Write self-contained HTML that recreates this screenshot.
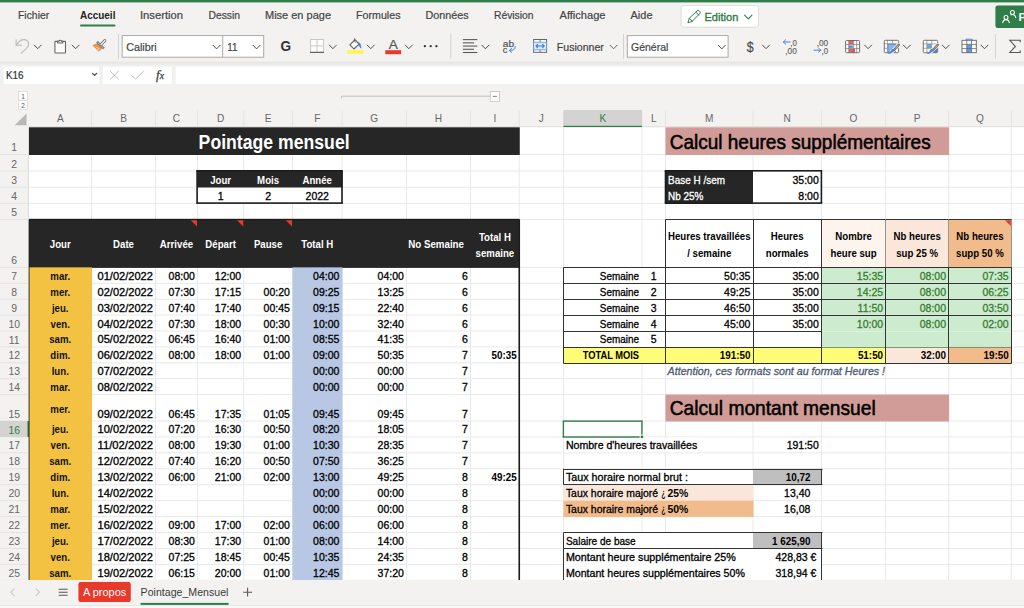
<!DOCTYPE html>
<html lang="fr"><head><meta charset="utf-8"><title>Pointage mensuel</title>
<style>
html,body{margin:0;padding:0}
body{width:1024px;height:608px;overflow:hidden;background:#f3f2f1;font-family:"Liberation Sans",sans-serif;position:relative}
.abs{position:absolute}
.tab{position:absolute;top:9px;font-size:10.5px;color:#444;line-height:13px;white-space:nowrap}
.tb{position:absolute;white-space:nowrap}

</style></head><body>
<svg width="1024" height="608" viewBox="0 0 1024 608" style="position:absolute;left:0;top:0;font-family:'Liberation Sans',sans-serif"><g><rect x="29" y="126.40" width="995" height="0.9" fill="#d9d8d7"/><rect x="28.2" y="127.30" width="0.9" height="452.70" fill="#d9d8d7"/><rect x="91.00" y="111.00" width="1" height="16.30" fill="#e4e3e2"/><rect x="155.00" y="111.00" width="1" height="16.30" fill="#e4e3e2"/><rect x="197.00" y="111.00" width="1" height="16.30" fill="#e4e3e2"/><rect x="243.25" y="111.00" width="1" height="16.30" fill="#e4e3e2"/><rect x="292.00" y="111.00" width="1" height="16.30" fill="#e4e3e2"/><rect x="341.50" y="111.00" width="1" height="16.30" fill="#e4e3e2"/><rect x="406.00" y="111.00" width="1" height="16.30" fill="#e4e3e2"/><rect x="470.00" y="111.00" width="1" height="16.30" fill="#e4e3e2"/><rect x="518.75" y="111.00" width="1" height="16.30" fill="#e4e3e2"/><rect x="563.00" y="111.00" width="1" height="16.30" fill="#e4e3e2"/><rect x="641.50" y="111.00" width="1" height="16.30" fill="#e4e3e2"/><rect x="665.00" y="111.00" width="1" height="16.30" fill="#e4e3e2"/><rect x="752.50" y="111.00" width="1" height="16.30" fill="#e4e3e2"/><rect x="820.90" y="111.00" width="1" height="16.30" fill="#e4e3e2"/><rect x="885.20" y="111.00" width="1" height="16.30" fill="#e4e3e2"/><rect x="948.10" y="111.00" width="1" height="16.30" fill="#e4e3e2"/><rect x="1010.80" y="111.00" width="1" height="16.30" fill="#e4e3e2"/><rect x="563.50" y="110.00" width="78.50" height="17.30" fill="#d4d3d1"/><rect x="563.50" y="125.80" width="78.50" height="1.5" fill="#2f7d4a"/><text x="60.25" y="121.50" text-anchor="middle" style="font-size:10.1px;fill:#666666">A</text><text x="123.50" y="121.50" text-anchor="middle" style="font-size:10.1px;fill:#666666">B</text><text x="176.50" y="121.50" text-anchor="middle" style="font-size:10.1px;fill:#666666">C</text><text x="220.62" y="121.50" text-anchor="middle" style="font-size:10.1px;fill:#666666">D</text><text x="268.12" y="121.50" text-anchor="middle" style="font-size:10.1px;fill:#666666">E</text><text x="317.25" y="121.50" text-anchor="middle" style="font-size:10.1px;fill:#666666">F</text><text x="374.25" y="121.50" text-anchor="middle" style="font-size:10.1px;fill:#666666">G</text><text x="438.50" y="121.50" text-anchor="middle" style="font-size:10.1px;fill:#666666">H</text><text x="494.88" y="121.50" text-anchor="middle" style="font-size:10.1px;fill:#666666">I</text><text x="541.38" y="121.50" text-anchor="middle" style="font-size:10.1px;fill:#666666">J</text><text x="602.75" y="121.50" text-anchor="middle" style="font-size:10.1px;fill:#2f7d4a">K</text><text x="653.75" y="121.50" text-anchor="middle" style="font-size:10.1px;fill:#666666">L</text><text x="709.25" y="121.50" text-anchor="middle" style="font-size:10.1px;fill:#666666">M</text><text x="787.20" y="121.50" text-anchor="middle" style="font-size:10.1px;fill:#666666">N</text><text x="853.55" y="121.50" text-anchor="middle" style="font-size:10.1px;fill:#666666">O</text><text x="917.15" y="121.50" text-anchor="middle" style="font-size:10.1px;fill:#666666">P</text><text x="979.95" y="121.50" text-anchor="middle" style="font-size:10.1px;fill:#666666">Q</text><rect x="0" y="154.00" width="29" height="1" fill="#e4e3e2"/><rect x="0" y="170.50" width="29" height="1" fill="#e4e3e2"/><rect x="0" y="186.70" width="29" height="1" fill="#e4e3e2"/><rect x="0" y="202.90" width="29" height="1" fill="#e4e3e2"/><rect x="0" y="219.00" width="29" height="1" fill="#e4e3e2"/><rect x="0" y="266.90" width="29" height="1" fill="#e4e3e2"/><rect x="0" y="282.80" width="29" height="1" fill="#e4e3e2"/><rect x="0" y="298.70" width="29" height="1" fill="#e4e3e2"/><rect x="0" y="314.60" width="29" height="1" fill="#e4e3e2"/><rect x="0" y="330.50" width="29" height="1" fill="#e4e3e2"/><rect x="0" y="346.40" width="29" height="1" fill="#e4e3e2"/><rect x="0" y="362.30" width="29" height="1" fill="#e4e3e2"/><rect x="0" y="378.20" width="29" height="1" fill="#e4e3e2"/><rect x="0" y="394.10" width="29" height="1" fill="#e4e3e2"/><rect x="0" y="420.50" width="29" height="1" fill="#e4e3e2"/><rect x="0" y="436.43" width="29" height="1" fill="#e4e3e2"/><rect x="0" y="452.36" width="29" height="1" fill="#e4e3e2"/><rect x="0" y="468.29" width="29" height="1" fill="#e4e3e2"/><rect x="0" y="484.22" width="29" height="1" fill="#e4e3e2"/><rect x="0" y="500.15" width="29" height="1" fill="#e4e3e2"/><rect x="0" y="516.08" width="29" height="1" fill="#e4e3e2"/><rect x="0" y="532.01" width="29" height="1" fill="#e4e3e2"/><rect x="0" y="547.94" width="29" height="1" fill="#e4e3e2"/><rect x="0" y="563.87" width="29" height="1" fill="#e4e3e2"/><rect x="0" y="579.80" width="29" height="1" fill="#e4e3e2"/><rect x="0" y="421.00" width="29" height="15.93" fill="#d4d3d1"/><rect x="27.5" y="421.00" width="1.5" height="15.93" fill="#2f7d4a"/><text x="14.20" y="151.10" text-anchor="middle" style="font-size:10.4px;fill:#666666">1</text><text x="14.20" y="167.60" text-anchor="middle" style="font-size:10.4px;fill:#666666">2</text><text x="14.20" y="183.80" text-anchor="middle" style="font-size:10.4px;fill:#666666">3</text><text x="14.20" y="200.00" text-anchor="middle" style="font-size:10.4px;fill:#666666">4</text><text x="14.20" y="216.10" text-anchor="middle" style="font-size:10.4px;fill:#666666">5</text><text x="14.20" y="264.00" text-anchor="middle" style="font-size:10.4px;fill:#666666">6</text><text x="14.20" y="279.90" text-anchor="middle" style="font-size:10.4px;fill:#666666">7</text><text x="14.20" y="295.80" text-anchor="middle" style="font-size:10.4px;fill:#666666">8</text><text x="14.20" y="311.70" text-anchor="middle" style="font-size:10.4px;fill:#666666">9</text><text x="14.20" y="327.60" text-anchor="middle" style="font-size:10.4px;fill:#666666">10</text><text x="14.20" y="343.50" text-anchor="middle" style="font-size:10.4px;fill:#666666">11</text><text x="14.20" y="359.40" text-anchor="middle" style="font-size:10.4px;fill:#666666">12</text><text x="14.20" y="375.30" text-anchor="middle" style="font-size:10.4px;fill:#666666">13</text><text x="14.20" y="391.20" text-anchor="middle" style="font-size:10.4px;fill:#666666">14</text><text x="14.20" y="417.60" text-anchor="middle" style="font-size:10.4px;fill:#666666">15</text><text x="14.20" y="433.53" text-anchor="middle" style="font-size:10.4px;fill:#2f7d4a">16</text><text x="14.20" y="449.46" text-anchor="middle" style="font-size:10.4px;fill:#666666">17</text><text x="14.20" y="465.39" text-anchor="middle" style="font-size:10.4px;fill:#666666">18</text><text x="14.20" y="481.32" text-anchor="middle" style="font-size:10.4px;fill:#666666">19</text><text x="14.20" y="497.25" text-anchor="middle" style="font-size:10.4px;fill:#666666">20</text><text x="14.20" y="513.18" text-anchor="middle" style="font-size:10.4px;fill:#666666">21</text><text x="14.20" y="529.11" text-anchor="middle" style="font-size:10.4px;fill:#666666">22</text><text x="14.20" y="545.04" text-anchor="middle" style="font-size:10.4px;fill:#666666">23</text><text x="14.20" y="560.97" text-anchor="middle" style="font-size:10.4px;fill:#666666">24</text><text x="14.20" y="576.90" text-anchor="middle" style="font-size:10.4px;fill:#666666">25</text><path d="M26.5 113.5V125.3H14.7Z" fill="#b9b8b7"/><rect x="18.6" y="91.60" width="9" height="8.8" fill="#fff" stroke="#d0cfce" stroke-width="0.6"/><text x="23.1" y="98.50" text-anchor="middle" style="font-size:6.5px;fill:#555">1</text><rect x="18.6" y="100.70" width="9" height="8.8" fill="#fff" stroke="#d0cfce" stroke-width="0.6"/><text x="23.1" y="107.60" text-anchor="middle" style="font-size:6.5px;fill:#555">2</text><path d="M341.5 98.5V96.2H490" fill="none" stroke="#c2c1c0" stroke-width="1"/><rect x="490.2" y="91.5" width="9.4" height="9.8" fill="#fff" stroke="#c2c1c0" stroke-width="0.8"/><rect x="492.9" y="95.9" width="4" height="0.9" fill="#777"/></g><g><rect x="29.00" y="127.30" width="995.00" height="452.70" fill="#fff" /><rect x="91.00" y="127.30" width="1.00" height="452.70" fill="#e9e9e9"/><rect x="155.00" y="127.30" width="1.00" height="452.70" fill="#e9e9e9"/><rect x="197.00" y="127.30" width="1.00" height="452.70" fill="#e9e9e9"/><rect x="243.25" y="127.30" width="1.00" height="452.70" fill="#e9e9e9"/><rect x="292.00" y="127.30" width="1.00" height="452.70" fill="#e9e9e9"/><rect x="341.50" y="127.30" width="1.00" height="452.70" fill="#e9e9e9"/><rect x="406.00" y="127.30" width="1.00" height="452.70" fill="#e9e9e9"/><rect x="470.00" y="127.30" width="1.00" height="452.70" fill="#e9e9e9"/><rect x="518.75" y="127.30" width="1.00" height="452.70" fill="#e9e9e9"/><rect x="563.00" y="127.30" width="1.00" height="452.70" fill="#e9e9e9"/><rect x="641.50" y="127.30" width="1.00" height="452.70" fill="#e9e9e9"/><rect x="665.00" y="127.30" width="1.00" height="452.70" fill="#e9e9e9"/><rect x="752.50" y="127.30" width="1.00" height="452.70" fill="#e9e9e9"/><rect x="820.90" y="127.30" width="1.00" height="452.70" fill="#e9e9e9"/><rect x="885.20" y="127.30" width="1.00" height="452.70" fill="#e9e9e9"/><rect x="948.10" y="127.30" width="1.00" height="452.70" fill="#e9e9e9"/><rect x="1010.80" y="127.30" width="1.00" height="452.70" fill="#e9e9e9"/><rect x="29.00" y="154.00" width="995.00" height="1.00" fill="#e9e9e9"/><rect x="29.00" y="170.50" width="995.00" height="1.00" fill="#e9e9e9"/><rect x="29.00" y="186.70" width="995.00" height="1.00" fill="#e9e9e9"/><rect x="29.00" y="202.90" width="995.00" height="1.00" fill="#e9e9e9"/><rect x="29.00" y="219.00" width="995.00" height="1.00" fill="#e9e9e9"/><rect x="29.00" y="266.90" width="995.00" height="1.00" fill="#e9e9e9"/><rect x="29.00" y="282.80" width="995.00" height="1.00" fill="#e9e9e9"/><rect x="29.00" y="298.70" width="995.00" height="1.00" fill="#e9e9e9"/><rect x="29.00" y="314.60" width="995.00" height="1.00" fill="#e9e9e9"/><rect x="29.00" y="330.50" width="995.00" height="1.00" fill="#e9e9e9"/><rect x="29.00" y="346.40" width="995.00" height="1.00" fill="#e9e9e9"/><rect x="29.00" y="362.30" width="995.00" height="1.00" fill="#e9e9e9"/><rect x="29.00" y="378.20" width="995.00" height="1.00" fill="#e9e9e9"/><rect x="29.00" y="394.10" width="995.00" height="1.00" fill="#e9e9e9"/><rect x="29.00" y="420.50" width="995.00" height="1.00" fill="#e9e9e9"/><rect x="29.00" y="436.43" width="995.00" height="1.00" fill="#e9e9e9"/><rect x="29.00" y="452.36" width="995.00" height="1.00" fill="#e9e9e9"/><rect x="29.00" y="468.29" width="995.00" height="1.00" fill="#e9e9e9"/><rect x="29.00" y="484.22" width="995.00" height="1.00" fill="#e9e9e9"/><rect x="29.00" y="500.15" width="995.00" height="1.00" fill="#e9e9e9"/><rect x="29.00" y="516.08" width="995.00" height="1.00" fill="#e9e9e9"/><rect x="29.00" y="532.01" width="995.00" height="1.00" fill="#e9e9e9"/><rect x="29.00" y="547.94" width="995.00" height="1.00" fill="#e9e9e9"/><rect x="29.00" y="563.87" width="995.00" height="1.00" fill="#e9e9e9"/><rect x="29.00" y="579.80" width="995.00" height="1.00" fill="#e9e9e9"/><rect x="29.00" y="127.30" width="490.75" height="27.70" fill="#262626" /><rect x="197.50" y="171.00" width="145.00" height="16.70" fill="#262626" /><rect x="197.50" y="187.70" width="145.00" height="16.20" fill="#fff" /><rect x="29.00" y="219.50" width="490.75" height="48.40" fill="#262626" /><rect x="29.00" y="267.40" width="63.00" height="313.10" fill="#f4c242" /><rect x="292.50" y="267.40" width="50.00" height="313.10" fill="#b7c7e4" /><rect x="665.50" y="127.30" width="283.60" height="27.70" fill="#d19b97" /><rect x="665.50" y="171.00" width="88.00" height="32.90" fill="#262626" /><rect x="753.00" y="171.00" width="68.90" height="32.90" fill="#fff" /><rect x="665.50" y="219.50" width="156.40" height="48.40" fill="#fff" /><rect x="821.40" y="219.50" width="64.80" height="48.40" fill="#fdf4ee" /><rect x="885.70" y="219.50" width="63.40" height="48.40" fill="#fbe7da" /><rect x="948.60" y="219.50" width="63.20" height="48.40" fill="#f1bb8c" /><rect x="563.50" y="267.40" width="258.40" height="80.00" fill="#fff" /><rect x="821.40" y="267.40" width="190.40" height="80.00" fill="#cdebcf" /><rect x="563.50" y="346.90" width="322.70" height="16.40" fill="#fffd78" /><rect x="885.70" y="346.90" width="63.40" height="16.40" fill="#fbe7da" /><rect x="948.60" y="346.90" width="63.20" height="16.40" fill="#f1bb8c" /><rect x="665.50" y="394.60" width="283.60" height="26.90" fill="#d19b97" /><rect x="563.50" y="468.79" width="190.00" height="16.43" fill="#fff" /><rect x="753.00" y="468.79" width="68.90" height="16.43" fill="#bfbfbf" /><rect x="563.50" y="484.72" width="190.00" height="16.43" fill="#fbe7da" /><rect x="563.50" y="500.65" width="190.00" height="16.43" fill="#f1bb8c" /><rect x="563.50" y="532.51" width="190.00" height="48.29" fill="#fff" /><rect x="753.00" y="532.51" width="68.90" height="16.43" fill="#bfbfbf" /><rect x="753.00" y="548.44" width="68.90" height="32.36" fill="#fff" /><rect x="564.10" y="437.53" width="135.90" height="14.73" fill="#fff" /><rect x="666.10" y="363.40" width="218.90" height="14.70" fill="#fff" /><rect x="28.70" y="219.50" width="0.80" height="360.50" fill="#1c1c1c"/><rect x="518.45" y="219.50" width="1.60" height="360.50" fill="#1c1c1c"/><rect x="29.00" y="218.80" width="490.25" height="1.40" fill="#1c1c1c"/><rect x="196.30" y="170.00" width="146.50" height="1.60" fill="#1c1c1c"/><rect x="196.30" y="202.30" width="146.50" height="1.60" fill="#1c1c1c"/><rect x="196.30" y="170.80" width="1.60" height="32.30" fill="#1c1c1c"/><rect x="341.20" y="170.80" width="1.60" height="32.30" fill="#1c1c1c"/><rect x="664.70" y="170.00" width="157.50" height="1.60" fill="#1c1c1c"/><rect x="664.70" y="202.30" width="157.50" height="1.60" fill="#1c1c1c"/><rect x="664.70" y="170.80" width="1.60" height="32.30" fill="#1c1c1c"/><rect x="820.60" y="170.80" width="1.60" height="32.30" fill="#1c1c1c"/><rect x="665.50" y="219.00" width="346.30" height="1.00" fill="#333333"/><rect x="753.00" y="219.50" width="1.00" height="47.90" fill="#333333"/><rect x="821.00" y="219.50" width="1.00" height="47.90" fill="#333333"/><rect x="665.00" y="219.50" width="1.00" height="47.90" fill="#333333"/><rect x="885.00" y="219.50" width="1.00" height="47.90" fill="#9a948e"/><rect x="948.00" y="219.50" width="1.00" height="47.90" fill="#9a948e"/><rect x="1011.00" y="219.50" width="1.00" height="47.90" fill="#9a948e"/><rect x="665.50" y="267.00" width="346.30" height="1.00" fill="#333333"/><rect x="563.50" y="283.00" width="448.30" height="1.00" fill="#333333"/><rect x="563.50" y="299.00" width="448.30" height="1.00" fill="#333333"/><rect x="563.50" y="315.00" width="448.30" height="1.00" fill="#333333"/><rect x="563.50" y="331.00" width="448.30" height="1.00" fill="#333333"/><rect x="563.50" y="347.00" width="448.30" height="1.00" fill="#333333"/><rect x="563.50" y="363.00" width="448.30" height="1.00" fill="#333333"/><rect x="563.50" y="267.00" width="189.50" height="1.00" fill="#333333"/><rect x="822.00" y="331.00" width="189.00" height="1.00" fill="#dcf1dc"/><rect x="822.00" y="347.00" width="189.00" height="1.00" fill="#7d956c"/><rect x="665.00" y="267.40" width="1.00" height="95.90" fill="#333333"/><rect x="753.00" y="267.40" width="1.00" height="95.90" fill="#333333"/><rect x="821.00" y="267.40" width="1.00" height="95.90" fill="#333333"/><rect x="885.00" y="267.40" width="1.00" height="95.90" fill="#333333"/><rect x="948.00" y="267.40" width="1.00" height="95.90" fill="#333333"/><rect x="1011.00" y="267.40" width="1.00" height="95.90" fill="#333333"/><rect x="563.00" y="267.40" width="1.00" height="95.90" fill="#333333"/><rect x="563.50" y="469.00" width="258.90" height="1.00" fill="#333333"/><rect x="563.50" y="484.00" width="258.90" height="1.00" fill="#333333"/><rect x="563.00" y="468.79" width="1.00" height="15.93" fill="#333333"/><rect x="821.00" y="468.79" width="1.00" height="15.93" fill="#333333"/><rect x="563.50" y="532.00" width="258.90" height="1.00" fill="#333333"/><rect x="563.50" y="548.00" width="258.90" height="1.00" fill="#333333"/><rect x="563.00" y="532.51" width="1.00" height="15.93" fill="#333333"/><rect x="821.00" y="532.51" width="1.00" height="15.93" fill="#333333"/><rect x="563.00" y="548.44" width="1.00" height="31.56" fill="#333333"/><rect x="821.00" y="548.44" width="1.00" height="31.56" fill="#333333"/><path d="M190.80 220.30H197.00V226.50Z" fill="#e8392b"/><path d="M237.05 220.30H243.25V226.50Z" fill="#e8392b"/><path d="M285.80 220.30H292.00V226.50Z" fill="#e8392b"/><path d="M1005.00 220.30H1010.80V226.10Z" fill="#e8392b"/><rect x="562.70" y="420.40" width="79.90" height="1.40" fill="#2f7d4a"/><rect x="562.70" y="436.33" width="79.90" height="1.40" fill="#2f7d4a"/><rect x="562.70" y="421.10" width="1.40" height="15.93" fill="#2f7d4a"/><rect x="641.20" y="421.10" width="1.40" height="15.93" fill="#2f7d4a"/><rect x="639.70" y="434.63" width="3.80" height="3.80" fill="#fff" /><rect x="640.70" y="435.63" width="2.50" height="2.50" fill="#2f7d4a" /><text x="274.12" y="148.80" text-anchor="middle" style="font-size:20.4px;fill:#fff;stroke:#fff;stroke-width:0.00px;font-weight:bold;" textLength="151" lengthAdjust="spacingAndGlyphs" >Pointage mensuel</text><text transform="translate(220.62,183.70) scale(0.92,1)" text-anchor="middle" style="font-size:10.5px;fill:#fff;stroke:#fff;stroke-width:0.00px;font-weight:bold;" >Jour</text><text transform="translate(268.12,183.70) scale(0.92,1)" text-anchor="middle" style="font-size:10.5px;fill:#fff;stroke:#fff;stroke-width:0.00px;font-weight:bold;" >Mois</text><text transform="translate(317.25,183.70) scale(0.92,1)" text-anchor="middle" style="font-size:10.5px;fill:#fff;stroke:#fff;stroke-width:0.00px;font-weight:bold;" >Année</text><text x="220.62" y="199.90" text-anchor="middle" style="font-size:10.5px;fill:#000;stroke:#000;stroke-width:0.30px;" >1</text><text x="268.12" y="199.90" text-anchor="middle" style="font-size:10.5px;fill:#000;stroke:#000;stroke-width:0.30px;" >2</text><text x="317.25" y="199.90" text-anchor="middle" style="font-size:10.5px;fill:#000;stroke:#000;stroke-width:0.30px;" >2022</text><text transform="translate(60.25,248.40) scale(0.92,1)" text-anchor="middle" style="font-size:10.5px;fill:#fff;stroke:#fff;stroke-width:0.00px;font-weight:bold;" >Jour</text><text transform="translate(123.50,248.40) scale(0.92,1)" text-anchor="middle" style="font-size:10.5px;fill:#fff;stroke:#fff;stroke-width:0.00px;font-weight:bold;" >Date</text><text transform="translate(176.50,248.40) scale(0.92,1)" text-anchor="middle" style="font-size:10.5px;fill:#fff;stroke:#fff;stroke-width:0.00px;font-weight:bold;" >Arrivée</text><text transform="translate(220.62,248.40) scale(0.92,1)" text-anchor="middle" style="font-size:10.5px;fill:#fff;stroke:#fff;stroke-width:0.00px;font-weight:bold;" >Départ</text><text transform="translate(268.12,248.40) scale(0.92,1)" text-anchor="middle" style="font-size:10.5px;fill:#fff;stroke:#fff;stroke-width:0.00px;font-weight:bold;" >Pause</text><text transform="translate(317.25,248.40) scale(0.92,1)" text-anchor="middle" style="font-size:10.5px;fill:#fff;stroke:#fff;stroke-width:0.00px;font-weight:bold;" >Total H</text><text x="436.10" y="248.40" text-anchor="middle" style="font-size:10.5px;fill:#fff;stroke:#fff;stroke-width:0.00px;font-weight:bold;" textLength="55.8" lengthAdjust="spacingAndGlyphs" >No Semaine</text><text transform="translate(494.88,240.70) scale(0.92,1)" text-anchor="middle" style="font-size:10.5px;fill:#fff;stroke:#fff;stroke-width:0.00px;font-weight:bold;" >Total H</text><text transform="translate(494.88,256.70) scale(0.92,1)" text-anchor="middle" style="font-size:10.5px;fill:#fff;stroke:#fff;stroke-width:0.00px;font-weight:bold;" >semaine</text><text transform="translate(60.25,279.80) scale(0.92,1)" text-anchor="middle" style="font-size:10.5px;fill:#111;stroke:#111;stroke-width:0.00px;font-weight:bold;" >mar.</text><text x="152.90" y="279.80" text-anchor="end" style="font-size:10.5px;fill:#000;stroke:#000;stroke-width:0.30px;" textLength="55.4" lengthAdjust="spacingAndGlyphs" >01/02/2022</text><text x="194.90" y="279.80" text-anchor="end" style="font-size:10.5px;fill:#000;stroke:#000;stroke-width:0.30px;" >08:00</text><text x="241.15" y="279.80" text-anchor="end" style="font-size:10.5px;fill:#000;stroke:#000;stroke-width:0.30px;" >12:00</text><text x="339.40" y="279.80" text-anchor="end" style="font-size:10.5px;fill:#000;stroke:#000;stroke-width:0.30px;" >04:00</text><text x="403.90" y="279.80" text-anchor="end" style="font-size:10.5px;fill:#000;stroke:#000;stroke-width:0.30px;" >04:00</text><text x="467.90" y="279.80" text-anchor="end" style="font-size:10.5px;fill:#000;stroke:#000;stroke-width:0.30px;" >6</text><text transform="translate(60.25,295.70) scale(0.92,1)" text-anchor="middle" style="font-size:10.5px;fill:#111;stroke:#111;stroke-width:0.00px;font-weight:bold;" >mer.</text><text x="152.90" y="295.70" text-anchor="end" style="font-size:10.5px;fill:#000;stroke:#000;stroke-width:0.30px;" textLength="55.4" lengthAdjust="spacingAndGlyphs" >02/02/2022</text><text x="194.90" y="295.70" text-anchor="end" style="font-size:10.5px;fill:#000;stroke:#000;stroke-width:0.30px;" >07:30</text><text x="241.15" y="295.70" text-anchor="end" style="font-size:10.5px;fill:#000;stroke:#000;stroke-width:0.30px;" >17:15</text><text x="289.90" y="295.70" text-anchor="end" style="font-size:10.5px;fill:#000;stroke:#000;stroke-width:0.30px;" >00:20</text><text x="339.40" y="295.70" text-anchor="end" style="font-size:10.5px;fill:#000;stroke:#000;stroke-width:0.30px;" >09:25</text><text x="403.90" y="295.70" text-anchor="end" style="font-size:10.5px;fill:#000;stroke:#000;stroke-width:0.30px;" >13:25</text><text x="467.90" y="295.70" text-anchor="end" style="font-size:10.5px;fill:#000;stroke:#000;stroke-width:0.30px;" >6</text><text transform="translate(60.25,311.60) scale(0.92,1)" text-anchor="middle" style="font-size:10.5px;fill:#111;stroke:#111;stroke-width:0.00px;font-weight:bold;" >jeu.</text><text x="152.90" y="311.60" text-anchor="end" style="font-size:10.5px;fill:#000;stroke:#000;stroke-width:0.30px;" textLength="55.4" lengthAdjust="spacingAndGlyphs" >03/02/2022</text><text x="194.90" y="311.60" text-anchor="end" style="font-size:10.5px;fill:#000;stroke:#000;stroke-width:0.30px;" >07:40</text><text x="241.15" y="311.60" text-anchor="end" style="font-size:10.5px;fill:#000;stroke:#000;stroke-width:0.30px;" >17:40</text><text x="289.90" y="311.60" text-anchor="end" style="font-size:10.5px;fill:#000;stroke:#000;stroke-width:0.30px;" >00:45</text><text x="339.40" y="311.60" text-anchor="end" style="font-size:10.5px;fill:#000;stroke:#000;stroke-width:0.30px;" >09:15</text><text x="403.90" y="311.60" text-anchor="end" style="font-size:10.5px;fill:#000;stroke:#000;stroke-width:0.30px;" >22:40</text><text x="467.90" y="311.60" text-anchor="end" style="font-size:10.5px;fill:#000;stroke:#000;stroke-width:0.30px;" >6</text><text transform="translate(60.25,327.50) scale(0.92,1)" text-anchor="middle" style="font-size:10.5px;fill:#111;stroke:#111;stroke-width:0.00px;font-weight:bold;" >ven.</text><text x="152.90" y="327.50" text-anchor="end" style="font-size:10.5px;fill:#000;stroke:#000;stroke-width:0.30px;" textLength="55.4" lengthAdjust="spacingAndGlyphs" >04/02/2022</text><text x="194.90" y="327.50" text-anchor="end" style="font-size:10.5px;fill:#000;stroke:#000;stroke-width:0.30px;" >07:30</text><text x="241.15" y="327.50" text-anchor="end" style="font-size:10.5px;fill:#000;stroke:#000;stroke-width:0.30px;" >18:00</text><text x="289.90" y="327.50" text-anchor="end" style="font-size:10.5px;fill:#000;stroke:#000;stroke-width:0.30px;" >00:30</text><text x="339.40" y="327.50" text-anchor="end" style="font-size:10.5px;fill:#000;stroke:#000;stroke-width:0.30px;" >10:00</text><text x="403.90" y="327.50" text-anchor="end" style="font-size:10.5px;fill:#000;stroke:#000;stroke-width:0.30px;" >32:40</text><text x="467.90" y="327.50" text-anchor="end" style="font-size:10.5px;fill:#000;stroke:#000;stroke-width:0.30px;" >6</text><text transform="translate(60.25,343.40) scale(0.92,1)" text-anchor="middle" style="font-size:10.5px;fill:#111;stroke:#111;stroke-width:0.00px;font-weight:bold;" >sam.</text><text x="152.90" y="343.40" text-anchor="end" style="font-size:10.5px;fill:#000;stroke:#000;stroke-width:0.30px;" textLength="55.4" lengthAdjust="spacingAndGlyphs" >05/02/2022</text><text x="194.90" y="343.40" text-anchor="end" style="font-size:10.5px;fill:#000;stroke:#000;stroke-width:0.30px;" >06:45</text><text x="241.15" y="343.40" text-anchor="end" style="font-size:10.5px;fill:#000;stroke:#000;stroke-width:0.30px;" >16:40</text><text x="289.90" y="343.40" text-anchor="end" style="font-size:10.5px;fill:#000;stroke:#000;stroke-width:0.30px;" >01:00</text><text x="339.40" y="343.40" text-anchor="end" style="font-size:10.5px;fill:#000;stroke:#000;stroke-width:0.30px;" >08:55</text><text x="403.90" y="343.40" text-anchor="end" style="font-size:10.5px;fill:#000;stroke:#000;stroke-width:0.30px;" >41:35</text><text x="467.90" y="343.40" text-anchor="end" style="font-size:10.5px;fill:#000;stroke:#000;stroke-width:0.30px;" >6</text><text transform="translate(60.25,359.30) scale(0.92,1)" text-anchor="middle" style="font-size:10.5px;fill:#111;stroke:#111;stroke-width:0.00px;font-weight:bold;" >dim.</text><text x="152.90" y="359.30" text-anchor="end" style="font-size:10.5px;fill:#000;stroke:#000;stroke-width:0.30px;" textLength="55.4" lengthAdjust="spacingAndGlyphs" >06/02/2022</text><text x="194.90" y="359.30" text-anchor="end" style="font-size:10.5px;fill:#000;stroke:#000;stroke-width:0.30px;" >08:00</text><text x="241.15" y="359.30" text-anchor="end" style="font-size:10.5px;fill:#000;stroke:#000;stroke-width:0.30px;" >18:00</text><text x="289.90" y="359.30" text-anchor="end" style="font-size:10.5px;fill:#000;stroke:#000;stroke-width:0.30px;" >01:00</text><text x="339.40" y="359.30" text-anchor="end" style="font-size:10.5px;fill:#000;stroke:#000;stroke-width:0.30px;" >09:00</text><text x="403.90" y="359.30" text-anchor="end" style="font-size:10.5px;fill:#000;stroke:#000;stroke-width:0.30px;" >50:35</text><text x="467.90" y="359.30" text-anchor="end" style="font-size:10.5px;fill:#000;stroke:#000;stroke-width:0.30px;" >7</text><text transform="translate(516.65,359.30) scale(0.94,1)" text-anchor="end" style="font-size:10.5px;fill:#000;stroke:#000;stroke-width:0.00px;font-weight:bold;" >50:35</text><text transform="translate(60.25,375.20) scale(0.92,1)" text-anchor="middle" style="font-size:10.5px;fill:#111;stroke:#111;stroke-width:0.00px;font-weight:bold;" >lun.</text><text x="152.90" y="375.20" text-anchor="end" style="font-size:10.5px;fill:#000;stroke:#000;stroke-width:0.30px;" textLength="55.4" lengthAdjust="spacingAndGlyphs" >07/02/2022</text><text x="339.40" y="375.20" text-anchor="end" style="font-size:10.5px;fill:#000;stroke:#000;stroke-width:0.30px;" >00:00</text><text x="403.90" y="375.20" text-anchor="end" style="font-size:10.5px;fill:#000;stroke:#000;stroke-width:0.30px;" >00:00</text><text x="467.90" y="375.20" text-anchor="end" style="font-size:10.5px;fill:#000;stroke:#000;stroke-width:0.30px;" >7</text><text transform="translate(60.25,391.10) scale(0.92,1)" text-anchor="middle" style="font-size:10.5px;fill:#111;stroke:#111;stroke-width:0.00px;font-weight:bold;" >mar.</text><text x="152.90" y="391.10" text-anchor="end" style="font-size:10.5px;fill:#000;stroke:#000;stroke-width:0.30px;" textLength="55.4" lengthAdjust="spacingAndGlyphs" >08/02/2022</text><text x="339.40" y="391.10" text-anchor="end" style="font-size:10.5px;fill:#000;stroke:#000;stroke-width:0.30px;" >00:00</text><text x="403.90" y="391.10" text-anchor="end" style="font-size:10.5px;fill:#000;stroke:#000;stroke-width:0.30px;" >00:00</text><text x="467.90" y="391.10" text-anchor="end" style="font-size:10.5px;fill:#000;stroke:#000;stroke-width:0.30px;" >7</text><text transform="translate(60.25,412.70) scale(0.92,1)" text-anchor="middle" style="font-size:10.5px;fill:#111;stroke:#111;stroke-width:0.00px;font-weight:bold;" >mer.</text><text x="152.90" y="417.50" text-anchor="end" style="font-size:10.5px;fill:#000;stroke:#000;stroke-width:0.30px;" textLength="55.4" lengthAdjust="spacingAndGlyphs" >09/02/2022</text><text x="194.90" y="417.50" text-anchor="end" style="font-size:10.5px;fill:#000;stroke:#000;stroke-width:0.30px;" >06:45</text><text x="241.15" y="417.50" text-anchor="end" style="font-size:10.5px;fill:#000;stroke:#000;stroke-width:0.30px;" >17:35</text><text x="289.90" y="417.50" text-anchor="end" style="font-size:10.5px;fill:#000;stroke:#000;stroke-width:0.30px;" >01:05</text><text x="339.40" y="417.50" text-anchor="end" style="font-size:10.5px;fill:#000;stroke:#000;stroke-width:0.30px;" >09:45</text><text x="403.90" y="417.50" text-anchor="end" style="font-size:10.5px;fill:#000;stroke:#000;stroke-width:0.30px;" >09:45</text><text x="467.90" y="417.50" text-anchor="end" style="font-size:10.5px;fill:#000;stroke:#000;stroke-width:0.30px;" >7</text><text transform="translate(60.25,433.43) scale(0.92,1)" text-anchor="middle" style="font-size:10.5px;fill:#111;stroke:#111;stroke-width:0.00px;font-weight:bold;" >jeu.</text><text x="152.90" y="433.43" text-anchor="end" style="font-size:10.5px;fill:#000;stroke:#000;stroke-width:0.30px;" textLength="55.4" lengthAdjust="spacingAndGlyphs" >10/02/2022</text><text x="194.90" y="433.43" text-anchor="end" style="font-size:10.5px;fill:#000;stroke:#000;stroke-width:0.30px;" >07:20</text><text x="241.15" y="433.43" text-anchor="end" style="font-size:10.5px;fill:#000;stroke:#000;stroke-width:0.30px;" >16:30</text><text x="289.90" y="433.43" text-anchor="end" style="font-size:10.5px;fill:#000;stroke:#000;stroke-width:0.30px;" >00:50</text><text x="339.40" y="433.43" text-anchor="end" style="font-size:10.5px;fill:#000;stroke:#000;stroke-width:0.30px;" >08:20</text><text x="403.90" y="433.43" text-anchor="end" style="font-size:10.5px;fill:#000;stroke:#000;stroke-width:0.30px;" >18:05</text><text x="467.90" y="433.43" text-anchor="end" style="font-size:10.5px;fill:#000;stroke:#000;stroke-width:0.30px;" >7</text><text transform="translate(60.25,449.36) scale(0.92,1)" text-anchor="middle" style="font-size:10.5px;fill:#111;stroke:#111;stroke-width:0.00px;font-weight:bold;" >ven.</text><text x="152.90" y="449.36" text-anchor="end" style="font-size:10.5px;fill:#000;stroke:#000;stroke-width:0.30px;" textLength="55.4" lengthAdjust="spacingAndGlyphs" >11/02/2022</text><text x="194.90" y="449.36" text-anchor="end" style="font-size:10.5px;fill:#000;stroke:#000;stroke-width:0.30px;" >08:00</text><text x="241.15" y="449.36" text-anchor="end" style="font-size:10.5px;fill:#000;stroke:#000;stroke-width:0.30px;" >19:30</text><text x="289.90" y="449.36" text-anchor="end" style="font-size:10.5px;fill:#000;stroke:#000;stroke-width:0.30px;" >01:00</text><text x="339.40" y="449.36" text-anchor="end" style="font-size:10.5px;fill:#000;stroke:#000;stroke-width:0.30px;" >10:30</text><text x="403.90" y="449.36" text-anchor="end" style="font-size:10.5px;fill:#000;stroke:#000;stroke-width:0.30px;" >28:35</text><text x="467.90" y="449.36" text-anchor="end" style="font-size:10.5px;fill:#000;stroke:#000;stroke-width:0.30px;" >7</text><text transform="translate(60.25,465.29) scale(0.92,1)" text-anchor="middle" style="font-size:10.5px;fill:#111;stroke:#111;stroke-width:0.00px;font-weight:bold;" >sam.</text><text x="152.90" y="465.29" text-anchor="end" style="font-size:10.5px;fill:#000;stroke:#000;stroke-width:0.30px;" textLength="55.4" lengthAdjust="spacingAndGlyphs" >12/02/2022</text><text x="194.90" y="465.29" text-anchor="end" style="font-size:10.5px;fill:#000;stroke:#000;stroke-width:0.30px;" >07:40</text><text x="241.15" y="465.29" text-anchor="end" style="font-size:10.5px;fill:#000;stroke:#000;stroke-width:0.30px;" >16:20</text><text x="289.90" y="465.29" text-anchor="end" style="font-size:10.5px;fill:#000;stroke:#000;stroke-width:0.30px;" >00:50</text><text x="339.40" y="465.29" text-anchor="end" style="font-size:10.5px;fill:#000;stroke:#000;stroke-width:0.30px;" >07:50</text><text x="403.90" y="465.29" text-anchor="end" style="font-size:10.5px;fill:#000;stroke:#000;stroke-width:0.30px;" >36:25</text><text x="467.90" y="465.29" text-anchor="end" style="font-size:10.5px;fill:#000;stroke:#000;stroke-width:0.30px;" >7</text><text transform="translate(60.25,481.22) scale(0.92,1)" text-anchor="middle" style="font-size:10.5px;fill:#111;stroke:#111;stroke-width:0.00px;font-weight:bold;" >dim.</text><text x="152.90" y="481.22" text-anchor="end" style="font-size:10.5px;fill:#000;stroke:#000;stroke-width:0.30px;" textLength="55.4" lengthAdjust="spacingAndGlyphs" >13/02/2022</text><text x="194.90" y="481.22" text-anchor="end" style="font-size:10.5px;fill:#000;stroke:#000;stroke-width:0.30px;" >06:00</text><text x="241.15" y="481.22" text-anchor="end" style="font-size:10.5px;fill:#000;stroke:#000;stroke-width:0.30px;" >21:00</text><text x="289.90" y="481.22" text-anchor="end" style="font-size:10.5px;fill:#000;stroke:#000;stroke-width:0.30px;" >02:00</text><text x="339.40" y="481.22" text-anchor="end" style="font-size:10.5px;fill:#000;stroke:#000;stroke-width:0.30px;" >13:00</text><text x="403.90" y="481.22" text-anchor="end" style="font-size:10.5px;fill:#000;stroke:#000;stroke-width:0.30px;" >49:25</text><text x="467.90" y="481.22" text-anchor="end" style="font-size:10.5px;fill:#000;stroke:#000;stroke-width:0.30px;" >8</text><text transform="translate(516.65,481.22) scale(0.94,1)" text-anchor="end" style="font-size:10.5px;fill:#000;stroke:#000;stroke-width:0.00px;font-weight:bold;" >49:25</text><text transform="translate(60.25,497.15) scale(0.92,1)" text-anchor="middle" style="font-size:10.5px;fill:#111;stroke:#111;stroke-width:0.00px;font-weight:bold;" >lun.</text><text x="152.90" y="497.15" text-anchor="end" style="font-size:10.5px;fill:#000;stroke:#000;stroke-width:0.30px;" textLength="55.4" lengthAdjust="spacingAndGlyphs" >14/02/2022</text><text x="339.40" y="497.15" text-anchor="end" style="font-size:10.5px;fill:#000;stroke:#000;stroke-width:0.30px;" >00:00</text><text x="403.90" y="497.15" text-anchor="end" style="font-size:10.5px;fill:#000;stroke:#000;stroke-width:0.30px;" >00:00</text><text x="467.90" y="497.15" text-anchor="end" style="font-size:10.5px;fill:#000;stroke:#000;stroke-width:0.30px;" >8</text><text transform="translate(60.25,513.08) scale(0.92,1)" text-anchor="middle" style="font-size:10.5px;fill:#111;stroke:#111;stroke-width:0.00px;font-weight:bold;" >mar.</text><text x="152.90" y="513.08" text-anchor="end" style="font-size:10.5px;fill:#000;stroke:#000;stroke-width:0.30px;" textLength="55.4" lengthAdjust="spacingAndGlyphs" >15/02/2022</text><text x="339.40" y="513.08" text-anchor="end" style="font-size:10.5px;fill:#000;stroke:#000;stroke-width:0.30px;" >00:00</text><text x="403.90" y="513.08" text-anchor="end" style="font-size:10.5px;fill:#000;stroke:#000;stroke-width:0.30px;" >00:00</text><text x="467.90" y="513.08" text-anchor="end" style="font-size:10.5px;fill:#000;stroke:#000;stroke-width:0.30px;" >8</text><text transform="translate(60.25,529.01) scale(0.92,1)" text-anchor="middle" style="font-size:10.5px;fill:#111;stroke:#111;stroke-width:0.00px;font-weight:bold;" >mer.</text><text x="152.90" y="529.01" text-anchor="end" style="font-size:10.5px;fill:#000;stroke:#000;stroke-width:0.30px;" textLength="55.4" lengthAdjust="spacingAndGlyphs" >16/02/2022</text><text x="194.90" y="529.01" text-anchor="end" style="font-size:10.5px;fill:#000;stroke:#000;stroke-width:0.30px;" >09:00</text><text x="241.15" y="529.01" text-anchor="end" style="font-size:10.5px;fill:#000;stroke:#000;stroke-width:0.30px;" >17:00</text><text x="289.90" y="529.01" text-anchor="end" style="font-size:10.5px;fill:#000;stroke:#000;stroke-width:0.30px;" >02:00</text><text x="339.40" y="529.01" text-anchor="end" style="font-size:10.5px;fill:#000;stroke:#000;stroke-width:0.30px;" >06:00</text><text x="403.90" y="529.01" text-anchor="end" style="font-size:10.5px;fill:#000;stroke:#000;stroke-width:0.30px;" >06:00</text><text x="467.90" y="529.01" text-anchor="end" style="font-size:10.5px;fill:#000;stroke:#000;stroke-width:0.30px;" >8</text><text transform="translate(60.25,544.94) scale(0.92,1)" text-anchor="middle" style="font-size:10.5px;fill:#111;stroke:#111;stroke-width:0.00px;font-weight:bold;" >jeu.</text><text x="152.90" y="544.94" text-anchor="end" style="font-size:10.5px;fill:#000;stroke:#000;stroke-width:0.30px;" textLength="55.4" lengthAdjust="spacingAndGlyphs" >17/02/2022</text><text x="194.90" y="544.94" text-anchor="end" style="font-size:10.5px;fill:#000;stroke:#000;stroke-width:0.30px;" >08:30</text><text x="241.15" y="544.94" text-anchor="end" style="font-size:10.5px;fill:#000;stroke:#000;stroke-width:0.30px;" >17:30</text><text x="289.90" y="544.94" text-anchor="end" style="font-size:10.5px;fill:#000;stroke:#000;stroke-width:0.30px;" >01:00</text><text x="339.40" y="544.94" text-anchor="end" style="font-size:10.5px;fill:#000;stroke:#000;stroke-width:0.30px;" >08:00</text><text x="403.90" y="544.94" text-anchor="end" style="font-size:10.5px;fill:#000;stroke:#000;stroke-width:0.30px;" >14:00</text><text x="467.90" y="544.94" text-anchor="end" style="font-size:10.5px;fill:#000;stroke:#000;stroke-width:0.30px;" >8</text><text transform="translate(60.25,560.87) scale(0.92,1)" text-anchor="middle" style="font-size:10.5px;fill:#111;stroke:#111;stroke-width:0.00px;font-weight:bold;" >ven.</text><text x="152.90" y="560.87" text-anchor="end" style="font-size:10.5px;fill:#000;stroke:#000;stroke-width:0.30px;" textLength="55.4" lengthAdjust="spacingAndGlyphs" >18/02/2022</text><text x="194.90" y="560.87" text-anchor="end" style="font-size:10.5px;fill:#000;stroke:#000;stroke-width:0.30px;" >07:25</text><text x="241.15" y="560.87" text-anchor="end" style="font-size:10.5px;fill:#000;stroke:#000;stroke-width:0.30px;" >18:45</text><text x="289.90" y="560.87" text-anchor="end" style="font-size:10.5px;fill:#000;stroke:#000;stroke-width:0.30px;" >00:45</text><text x="339.40" y="560.87" text-anchor="end" style="font-size:10.5px;fill:#000;stroke:#000;stroke-width:0.30px;" >10:35</text><text x="403.90" y="560.87" text-anchor="end" style="font-size:10.5px;fill:#000;stroke:#000;stroke-width:0.30px;" >24:35</text><text x="467.90" y="560.87" text-anchor="end" style="font-size:10.5px;fill:#000;stroke:#000;stroke-width:0.30px;" >8</text><text transform="translate(60.25,576.80) scale(0.92,1)" text-anchor="middle" style="font-size:10.5px;fill:#111;stroke:#111;stroke-width:0.00px;font-weight:bold;" >sam.</text><text x="152.90" y="576.80" text-anchor="end" style="font-size:10.5px;fill:#000;stroke:#000;stroke-width:0.30px;" textLength="55.4" lengthAdjust="spacingAndGlyphs" >19/02/2022</text><text x="194.90" y="576.80" text-anchor="end" style="font-size:10.5px;fill:#000;stroke:#000;stroke-width:0.30px;" >06:15</text><text x="241.15" y="576.80" text-anchor="end" style="font-size:10.5px;fill:#000;stroke:#000;stroke-width:0.30px;" >20:00</text><text x="289.90" y="576.80" text-anchor="end" style="font-size:10.5px;fill:#000;stroke:#000;stroke-width:0.30px;" >01:00</text><text x="339.40" y="576.80" text-anchor="end" style="font-size:10.5px;fill:#000;stroke:#000;stroke-width:0.30px;" >12:45</text><text x="403.90" y="576.80" text-anchor="end" style="font-size:10.5px;fill:#000;stroke:#000;stroke-width:0.30px;" >37:20</text><text x="467.90" y="576.80" text-anchor="end" style="font-size:10.5px;fill:#000;stroke:#000;stroke-width:0.30px;" >8</text><text x="669.70" y="148.50" text-anchor="start" style="font-size:19.8px;fill:#000;stroke:#000;stroke-width:0.53px;" textLength="261" lengthAdjust="spacingAndGlyphs" >Calcul heures supplémentaires</text><text x="669.70" y="415.30" text-anchor="start" style="font-size:19.8px;fill:#000;stroke:#000;stroke-width:0.53px;" textLength="206" lengthAdjust="spacingAndGlyphs" >Calcul montant mensuel</text><text x="668.10" y="183.70" text-anchor="start" style="font-size:10.5px;fill:#fff;stroke:#fff;stroke-width:0.30px;" textLength="56.9" lengthAdjust="spacingAndGlyphs" >Base H /sem</text><text x="668.10" y="199.90" text-anchor="start" style="font-size:10.5px;fill:#fff;stroke:#fff;stroke-width:0.30px;" textLength="35.3" lengthAdjust="spacingAndGlyphs" >Nb 25%</text><text x="818.80" y="183.70" text-anchor="end" style="font-size:10.5px;fill:#000;stroke:#000;stroke-width:0.30px;" >35:00</text><text x="818.80" y="199.90" text-anchor="end" style="font-size:10.5px;fill:#000;stroke:#000;stroke-width:0.30px;" >8:00</text><text transform="translate(709.25,240.20) scale(0.92,1)" text-anchor="middle" style="font-size:10.5px;fill:#000;stroke:#000;stroke-width:0.00px;font-weight:bold;" >Heures travaillées</text><text transform="translate(709.25,256.60) scale(0.92,1)" text-anchor="middle" style="font-size:10.5px;fill:#000;stroke:#000;stroke-width:0.00px;font-weight:bold;" >/ semaine</text><text transform="translate(787.20,240.20) scale(0.92,1)" text-anchor="middle" style="font-size:10.5px;fill:#000;stroke:#000;stroke-width:0.00px;font-weight:bold;" >Heures</text><text transform="translate(787.20,256.60) scale(0.92,1)" text-anchor="middle" style="font-size:10.5px;fill:#000;stroke:#000;stroke-width:0.00px;font-weight:bold;" >normales</text><text transform="translate(853.55,240.20) scale(0.92,1)" text-anchor="middle" style="font-size:10.5px;fill:#000;stroke:#000;stroke-width:0.00px;font-weight:bold;" >Nombre</text><text transform="translate(853.55,256.60) scale(0.92,1)" text-anchor="middle" style="font-size:10.5px;fill:#000;stroke:#000;stroke-width:0.00px;font-weight:bold;" >heure sup</text><text transform="translate(917.15,240.20) scale(0.92,1)" text-anchor="middle" style="font-size:10.5px;fill:#000;stroke:#000;stroke-width:0.00px;font-weight:bold;" >Nb heures</text><text transform="translate(917.15,256.60) scale(0.92,1)" text-anchor="middle" style="font-size:10.5px;fill:#000;stroke:#000;stroke-width:0.00px;font-weight:bold;" >sup 25 %</text><text transform="translate(979.95,240.20) scale(0.92,1)" text-anchor="middle" style="font-size:10.5px;fill:#000;stroke:#000;stroke-width:0.00px;font-weight:bold;" >Nb heures</text><text transform="translate(979.95,256.60) scale(0.92,1)" text-anchor="middle" style="font-size:10.5px;fill:#000;stroke:#000;stroke-width:0.00px;font-weight:bold;" >supp 50 %</text><text x="639.10" y="279.80" text-anchor="end" style="font-size:10.5px;fill:#000;stroke:#000;stroke-width:0.30px;" textLength="39.3" lengthAdjust="spacingAndGlyphs" >Semaine</text><text x="653.75" y="279.80" text-anchor="middle" style="font-size:10.5px;fill:#000;stroke:#000;stroke-width:0.30px;" >1</text><text x="750.40" y="279.80" text-anchor="end" style="font-size:10.5px;fill:#000;stroke:#000;stroke-width:0.30px;" >50:35</text><text x="818.80" y="279.80" text-anchor="end" style="font-size:10.5px;fill:#000;stroke:#000;stroke-width:0.30px;" >35:00</text><text x="883.10" y="279.80" text-anchor="end" style="font-size:10.5px;fill:#3a7d32;stroke:#3a7d32;stroke-width:0.30px;" >15:35</text><text x="946.00" y="279.80" text-anchor="end" style="font-size:10.5px;fill:#3a7d32;stroke:#3a7d32;stroke-width:0.30px;" >08:00</text><text x="1008.70" y="279.80" text-anchor="end" style="font-size:10.5px;fill:#3a7d32;stroke:#3a7d32;stroke-width:0.30px;" >07:35</text><text x="639.10" y="295.70" text-anchor="end" style="font-size:10.5px;fill:#000;stroke:#000;stroke-width:0.30px;" textLength="39.3" lengthAdjust="spacingAndGlyphs" >Semaine</text><text x="653.75" y="295.70" text-anchor="middle" style="font-size:10.5px;fill:#000;stroke:#000;stroke-width:0.30px;" >2</text><text x="750.40" y="295.70" text-anchor="end" style="font-size:10.5px;fill:#000;stroke:#000;stroke-width:0.30px;" >49:25</text><text x="818.80" y="295.70" text-anchor="end" style="font-size:10.5px;fill:#000;stroke:#000;stroke-width:0.30px;" >35:00</text><text x="883.10" y="295.70" text-anchor="end" style="font-size:10.5px;fill:#3a7d32;stroke:#3a7d32;stroke-width:0.30px;" >14:25</text><text x="946.00" y="295.70" text-anchor="end" style="font-size:10.5px;fill:#3a7d32;stroke:#3a7d32;stroke-width:0.30px;" >08:00</text><text x="1008.70" y="295.70" text-anchor="end" style="font-size:10.5px;fill:#3a7d32;stroke:#3a7d32;stroke-width:0.30px;" >06:25</text><text x="639.10" y="311.60" text-anchor="end" style="font-size:10.5px;fill:#000;stroke:#000;stroke-width:0.30px;" textLength="39.3" lengthAdjust="spacingAndGlyphs" >Semaine</text><text x="653.75" y="311.60" text-anchor="middle" style="font-size:10.5px;fill:#000;stroke:#000;stroke-width:0.30px;" >3</text><text x="750.40" y="311.60" text-anchor="end" style="font-size:10.5px;fill:#000;stroke:#000;stroke-width:0.30px;" >46:50</text><text x="818.80" y="311.60" text-anchor="end" style="font-size:10.5px;fill:#000;stroke:#000;stroke-width:0.30px;" >35:00</text><text x="883.10" y="311.60" text-anchor="end" style="font-size:10.5px;fill:#3a7d32;stroke:#3a7d32;stroke-width:0.30px;" >11:50</text><text x="946.00" y="311.60" text-anchor="end" style="font-size:10.5px;fill:#3a7d32;stroke:#3a7d32;stroke-width:0.30px;" >08:00</text><text x="1008.70" y="311.60" text-anchor="end" style="font-size:10.5px;fill:#3a7d32;stroke:#3a7d32;stroke-width:0.30px;" >03:50</text><text x="639.10" y="327.50" text-anchor="end" style="font-size:10.5px;fill:#000;stroke:#000;stroke-width:0.30px;" textLength="39.3" lengthAdjust="spacingAndGlyphs" >Semaine</text><text x="653.75" y="327.50" text-anchor="middle" style="font-size:10.5px;fill:#000;stroke:#000;stroke-width:0.30px;" >4</text><text x="750.40" y="327.50" text-anchor="end" style="font-size:10.5px;fill:#000;stroke:#000;stroke-width:0.30px;" >45:00</text><text x="818.80" y="327.50" text-anchor="end" style="font-size:10.5px;fill:#000;stroke:#000;stroke-width:0.30px;" >35:00</text><text x="883.10" y="327.50" text-anchor="end" style="font-size:10.5px;fill:#3a7d32;stroke:#3a7d32;stroke-width:0.30px;" >10:00</text><text x="946.00" y="327.50" text-anchor="end" style="font-size:10.5px;fill:#3a7d32;stroke:#3a7d32;stroke-width:0.30px;" >08:00</text><text x="1008.70" y="327.50" text-anchor="end" style="font-size:10.5px;fill:#3a7d32;stroke:#3a7d32;stroke-width:0.30px;" >02:00</text><text x="639.10" y="343.40" text-anchor="end" style="font-size:10.5px;fill:#000;stroke:#000;stroke-width:0.30px;" textLength="39.3" lengthAdjust="spacingAndGlyphs" >Semaine</text><text x="653.75" y="343.40" text-anchor="middle" style="font-size:10.5px;fill:#000;stroke:#000;stroke-width:0.30px;" >5</text><text x="639.10" y="359.30" text-anchor="end" style="font-size:10.5px;fill:#000;stroke:#000;stroke-width:0.00px;font-weight:bold;" textLength="56.4" lengthAdjust="spacingAndGlyphs" >TOTAL MOIS</text><text transform="translate(750.40,359.30) scale(0.94,1)" text-anchor="end" style="font-size:10.5px;fill:#000;stroke:#000;stroke-width:0.00px;font-weight:bold;" >191:50</text><text transform="translate(883.10,359.30) scale(0.94,1)" text-anchor="end" style="font-size:10.5px;fill:#000;stroke:#000;stroke-width:0.00px;font-weight:bold;" >51:50</text><text transform="translate(946.00,359.30) scale(0.94,1)" text-anchor="end" style="font-size:10.5px;fill:#000;stroke:#000;stroke-width:0.00px;font-weight:bold;" >32:00</text><text transform="translate(1008.70,359.30) scale(0.94,1)" text-anchor="end" style="font-size:10.5px;fill:#000;stroke:#000;stroke-width:0.00px;font-weight:bold;" >19:50</text><text x="667.60" y="375.20" text-anchor="start" style="font-size:10.5px;fill:#4b5a73;stroke:#4b5a73;stroke-width:0.30px;font-style:italic;" textLength="217.5" lengthAdjust="spacingAndGlyphs" >Attention, ces formats sont au format Heures !</text><text x="565.90" y="449.36" text-anchor="start" style="font-size:10.5px;fill:#000;stroke:#000;stroke-width:0.30px;" textLength="131.4" lengthAdjust="spacingAndGlyphs" >Nombre d&#x27;heures travaillées</text><text x="818.80" y="449.36" text-anchor="end" style="font-size:10.5px;fill:#000;stroke:#000;stroke-width:0.30px;" >191:50</text><text x="565.90" y="481.22" text-anchor="start" style="font-size:10.5px;fill:#000;stroke:#000;stroke-width:0.30px;" textLength="122" lengthAdjust="spacingAndGlyphs" >Taux horaire normal brut :</text><text transform="translate(810.40,481.22) scale(0.94,1)" text-anchor="end" style="font-size:10.5px;fill:#000;stroke:#000;stroke-width:0.00px;font-weight:bold;" >10,72</text><text x="565.90" y="497.15" text-anchor="start" style="font-size:10.5px;fill:#000;stroke:#000;stroke-width:0.30px;" textLength="92.2" lengthAdjust="spacingAndGlyphs" >Taux horaire majoré</text><text transform="translate(661.40,497.15) scale(0.62,1)" text-anchor="start" style="font-size:10.5px;fill:#000;stroke:#000;stroke-width:0.30px;" >¿</text><text x="667.40" y="497.15" text-anchor="start" style="font-size:10.5px;fill:#000;stroke:#000;stroke-width:0.00px;font-weight:bold;" textLength="20.8" lengthAdjust="spacingAndGlyphs" >25%</text><text x="810.40" y="497.15" text-anchor="end" style="font-size:10.5px;fill:#000;stroke:#000;stroke-width:0.30px;" >13,40</text><text x="565.90" y="513.08" text-anchor="start" style="font-size:10.5px;fill:#000;stroke:#000;stroke-width:0.30px;" textLength="92.2" lengthAdjust="spacingAndGlyphs" >Taux horaire majoré</text><text transform="translate(661.40,513.08) scale(0.62,1)" text-anchor="start" style="font-size:10.5px;fill:#000;stroke:#000;stroke-width:0.30px;" >¿</text><text x="667.40" y="513.08" text-anchor="start" style="font-size:10.5px;fill:#000;stroke:#000;stroke-width:0.00px;font-weight:bold;" textLength="20.8" lengthAdjust="spacingAndGlyphs" >50%</text><text x="810.40" y="513.08" text-anchor="end" style="font-size:10.5px;fill:#000;stroke:#000;stroke-width:0.30px;" >16,08</text><text x="565.90" y="544.94" text-anchor="start" style="font-size:10.5px;fill:#000;stroke:#000;stroke-width:0.30px;" textLength="69.8" lengthAdjust="spacingAndGlyphs" >Salaire de base</text><text transform="translate(810.40,544.94) scale(0.94,1)" text-anchor="end" style="font-size:10.5px;fill:#000;stroke:#000;stroke-width:0.00px;font-weight:bold;" >1 625,90</text><text x="565.90" y="560.87" text-anchor="start" style="font-size:10.5px;fill:#000;stroke:#000;stroke-width:0.30px;" textLength="169.9" lengthAdjust="spacingAndGlyphs" >Montant heure supplémentaire 25%</text><text x="816.40" y="560.87" text-anchor="end" style="font-size:10.5px;fill:#000;stroke:#000;stroke-width:0.30px;" >428,83 €</text><text x="565.90" y="576.80" text-anchor="start" style="font-size:10.5px;fill:#000;stroke:#000;stroke-width:0.30px;" textLength="179" lengthAdjust="spacingAndGlyphs" >Montant heures supplémentaires 50%</text><text x="816.40" y="576.80" text-anchor="end" style="font-size:10.5px;fill:#000;stroke:#000;stroke-width:0.30px;" >318,94 €</text></g></svg>
<svg width="1024" height="86" viewBox="0 0 1024 86" style="position:absolute;left:0;top:0;font-family:'Liberation Sans',sans-serif"><rect x="0" y="0" width="1024" height="62" fill="#f3f2f1"/><defs><linearGradient id="sh" x1="0" y1="0" x2="0" y2="1"><stop offset="0" stop-color="#e3e2e1"/><stop offset="1" stop-color="#f1f1f0"/></linearGradient></defs><rect x="0" y="61.7" width="1024" height="3.6" fill="url(#sh)"/><rect x="0" y="65.3" width="1024" height="20.5" fill="#f1f1f0"/><rect x="0" y="0" width="1024" height="2.4" fill="#2f7d48"/><text x="18" y="19.2" text-anchor="start" style="font-size:10.5px;fill:#444;stroke:#444;stroke-width:0.2px;" textLength="31.2" lengthAdjust="spacingAndGlyphs">Fichier</text><text x="140" y="19.2" text-anchor="start" style="font-size:10.5px;fill:#444;stroke:#444;stroke-width:0.2px;" textLength="43" lengthAdjust="spacingAndGlyphs">Insertion</text><text x="208.5" y="19.2" text-anchor="start" style="font-size:10.5px;fill:#444;stroke:#444;stroke-width:0.2px;" textLength="31.5" lengthAdjust="spacingAndGlyphs">Dessin</text><text x="265" y="19.2" text-anchor="start" style="font-size:10.5px;fill:#444;stroke:#444;stroke-width:0.2px;" textLength="66" lengthAdjust="spacingAndGlyphs">Mise en page</text><text x="356" y="19.2" text-anchor="start" style="font-size:10.5px;fill:#444;stroke:#444;stroke-width:0.2px;" textLength="44.5" lengthAdjust="spacingAndGlyphs">Formules</text><text x="425.5" y="19.2" text-anchor="start" style="font-size:10.5px;fill:#444;stroke:#444;stroke-width:0.2px;" textLength="43" lengthAdjust="spacingAndGlyphs">Données</text><text x="494" y="19.2" text-anchor="start" style="font-size:10.5px;fill:#444;stroke:#444;stroke-width:0.2px;" textLength="39.5" lengthAdjust="spacingAndGlyphs">Révision</text><text x="559.5" y="19.2" text-anchor="start" style="font-size:10.5px;fill:#444;stroke:#444;stroke-width:0.2px;" textLength="46" lengthAdjust="spacingAndGlyphs">Affichage</text><text x="630.5" y="19.2" text-anchor="start" style="font-size:10.5px;fill:#444;stroke:#444;stroke-width:0.2px;" textLength="22" lengthAdjust="spacingAndGlyphs">Aide</text><text x="80" y="19.2" text-anchor="start" style="font-size:10.5px;fill:#222;font-weight:bold;" textLength="35.4" lengthAdjust="spacingAndGlyphs">Accueil</text><rect x="80" y="24.6" width="35.5" height="2" rx="1" fill="#2f7d48"/><rect x="681.1" y="5.6" width="77.4" height="21.6" rx="2" fill="#fff" stroke="#d6d5d4" stroke-width="0.8"/><g fill="none" stroke="#2f7d48" stroke-width="1" stroke-linejoin="round" stroke-linecap="round"><path d="M688 22.4L689.3 18.2L697 10.9a1.5 1.5 0 0 1 2.2 0l0.6 0.6a1.5 1.5 0 0 1 0 2.2L692.2 21.2Z"/><path d="M689.3 18.2L692.2 21.2"/><path d="M695.8 12.1L698.7 15"/></g><text x="704.5" y="20.9" text-anchor="start" style="font-size:11px;fill:#2f7d48;stroke:#2f7d48;stroke-width:0.2px;stroke:#2f7d48;stroke-width:0.35px;" textLength="33.8" lengthAdjust="spacingAndGlyphs">Edition</text><path d="M744.60 15.20L748.30 18.80L752.00 15.20" fill="none" stroke="#2f7d48" stroke-width="1.1" stroke-linecap="round" stroke-linejoin="round"/><rect x="995.4" y="5.6" width="40" height="22.3" rx="2.2" fill="#2f7d48"/><g fill="none" stroke="#fff" stroke-width="1.05"><circle cx="1012.4" cy="12.4" r="2"/><path d="M1010.6 15.2c0.6-0.5 1.2-0.7 1.8-0.7c1.600 0 3 1 3.400 3.600"/><circle cx="1006" cy="17.5" r="2"/><path d="M1002.6 23.2c0.4-2.6 1.8-3.6 3.4-3.6s3 1 3.4 3.6"/></g><text x="1018.6" y="21" text-anchor="start" style="font-size:11.5px;fill:#fff;font-weight:bold;">P</text><g fill="none" stroke="#b9b8b7" stroke-width="1.1" stroke-linecap="round" stroke-linejoin="round"><path d="M16.1 39.8V45.3H21.8"/><path d="M16.4 45.1C18.6 41.2 21.8 39.4 24.6 39.6C27.7 39.9 29.4 42.6 28.4 45.4C27.4 48.1 24.2 50.6 21.1 53.2"/></g><path d="M34.20 45.10L37.70 48.70L41.20 45.10" fill="none" stroke="#505050" stroke-width="1.0" stroke-linecap="round" stroke-linejoin="round"/><g fill="#fbfbfb" stroke="#666" stroke-width="1.1" stroke-linejoin="round"><rect x="54.9" y="41.4" width="10.6" height="11.6" rx="0.8"/><path d="M57.6 43V41.2h1.3a1.4 1.6 0 0 1 2.6 0h1.3V43Z" fill="#f3f2f1"/></g><path d="M72.10 45.10L75.60 48.70L79.10 45.10" fill="none" stroke="#505050" stroke-width="1.0" stroke-linecap="round" stroke-linejoin="round"/><g><path d="M97.6 43L102.3 48.2L98.8 51.8L92.4 45.3Z" fill="#e8914a"/><path d="M95.6 46.9L99.9 48.9M97 49.2L99 50.1" stroke="#f8d9bf" stroke-width="0.8" fill="none"/><path d="M97.9 42.5L103.1 47.7" stroke="#666" stroke-width="2.3" fill="none" stroke-linecap="square"/><path d="M97.9 42.5L103.1 47.7" stroke="#f6f6f5" stroke-width="0.8" fill="none" stroke-linecap="square"/><path d="M101 44.6L104.9 40.5" stroke="#666" stroke-width="2.9" fill="none" stroke-linecap="round"/><path d="M100.9 44.7L104.9 40.5" stroke="#f6f6f5" stroke-width="1.3" fill="none" stroke-linecap="round"/></g><rect x="118.0" y="34" width="1" height="24.7" fill="#d4d2d0"/><rect x="450.3" y="34" width="1" height="24.7" fill="#d4d2d0"/><rect x="623.0" y="34" width="1" height="24.7" fill="#d4d2d0"/><rect x="994.9" y="34" width="1" height="24.7" fill="#d4d2d0"/><rect x="122.2" y="35.6" width="141.5" height="21.6" fill="#fff" stroke="#a9a8a7" stroke-width="1"/><rect x="222.2" y="35.6" width="1" height="21.6" fill="#a9a8a7"/><text x="126.2" y="50.9" text-anchor="start" style="font-size:11px;fill:#444;stroke:#444;stroke-width:0.2px;" textLength="30.5" lengthAdjust="spacingAndGlyphs">Calibri</text><path d="M213.10 45.30L216.60 48.90L220.10 45.30" fill="none" stroke="#505050" stroke-width="1.0" stroke-linecap="round" stroke-linejoin="round"/><text x="227.3" y="50.9" text-anchor="start" style="font-size:11px;fill:#444;stroke:#444;stroke-width:0.2px;" textLength="10.2" lengthAdjust="spacingAndGlyphs">11</text><path d="M253.10 45.30L256.60 48.90L260.10 45.30" fill="none" stroke="#505050" stroke-width="1.0" stroke-linecap="round" stroke-linejoin="round"/><text x="280.4" y="50.6" text-anchor="start" style="font-size:14.4px;fill:#333;font-weight:bold;" textLength="10.6" lengthAdjust="spacingAndGlyphs">G</text><g><rect x="310.6" y="39.5" width="12.8" height="12.8" fill="#fdfdfd" stroke="#c4c3c2" stroke-width="0.9"/><path d="M317 39.5V52.3M310.6 45.9H323.4" stroke="#c4c3c2" stroke-width="0.9" fill="none"/><path d="M310 52.4H324" stroke="#606060" stroke-width="1.2"/></g><path d="M329.40 45.10L332.90 48.70L336.40 45.10" fill="none" stroke="#505050" stroke-width="1.0" stroke-linecap="round" stroke-linejoin="round"/><g fill="none" stroke-linejoin="round"><path d="M349.9 44.9L355 39.6L359.2 44.1L353.9 49Z" fill="#fafafa" stroke="#5c5c5c" stroke-width="1.05"/><path d="M354.6 38.3C354 40 354.6 41.6 355.6 42.6" stroke="#5c5c5c" stroke-width="1"/><path d="M357.6 42.4C359.6 42.3 360.9 43.9 361 48.2C359.9 47.2 359.3 45.6 358.7 44.4Z" fill="#3b7dd8" stroke="#3b7dd8" stroke-width="0.6"/></g><rect x="347.2" y="50.2" width="16.2" height="3.8" fill="#fff35c"/><path d="M367.30 45.10L370.80 48.70L374.30 45.10" fill="none" stroke="#505050" stroke-width="1.0" stroke-linecap="round" stroke-linejoin="round"/><text x="393.3" y="49.3" text-anchor="middle" style="font-size:13.6px;fill:#555;stroke:#555;stroke-width:0.2px;">A</text><rect x="385.3" y="50.2" width="15.8" height="4" fill="#e8392b"/><path d="M405.30 45.10L408.80 48.70L412.30 45.10" fill="none" stroke="#505050" stroke-width="1.0" stroke-linecap="round" stroke-linejoin="round"/><circle cx="424.9" cy="46.2" r="1.15" fill="#333"/><circle cx="430.7" cy="46.2" r="1.15" fill="#333"/><circle cx="436.4" cy="46.2" r="1.15" fill="#333"/><rect x="462.9" y="39.05" width="14.40" height="1.1" fill="#5c5c5c"/><rect x="462.9" y="42.30" width="11.10" height="1.1" fill="#5c5c5c"/><rect x="462.9" y="45.55" width="14.40" height="1.1" fill="#5c5c5c"/><rect x="462.9" y="48.75" width="11.10" height="1.1" fill="#5c5c5c"/><rect x="462.9" y="51.95" width="14.40" height="1.1" fill="#5c5c5c"/><path d="M481.90 45.20L485.40 48.80L488.90 45.20" fill="none" stroke="#505050" stroke-width="1.0" stroke-linecap="round" stroke-linejoin="round"/><text x="502.8" y="46.5" text-anchor="start" style="font-size:9.3px;fill:#555;stroke:#555;stroke-width:0.2px;" textLength="11.2" lengthAdjust="spacingAndGlyphs">ab</text><text x="502.8" y="52.6" text-anchor="start" style="font-size:9.3px;fill:#555;stroke:#555;stroke-width:0.2px;">c</text><path d="M515.2 46.6C515.6 49 513.8 50.6 509.6 50.4M511.6 48.3L509.4 50.4L511.6 52.5" fill="none" stroke="#3b7dd8" stroke-width="1" stroke-linecap="round" stroke-linejoin="round"/><g><rect x="533.6" y="39.5" width="13" height="12.8" fill="#fdfdfd" stroke="#666" stroke-width="1"/><rect x="533.6" y="42.2" width="13" height="7.6" fill="#dbe8f8" stroke="#5b96dc" stroke-width="0.8"/><path d="M540.1 39.5V42M540.1 50V52.3" stroke="#666" stroke-width="0.9"/><path d="M536 46H544.2M537.6 44.4L536 46L537.6 47.6M542.6 44.4L544.2 46L542.6 47.6" fill="none" stroke="#3b7dd8" stroke-width="1.1" stroke-linecap="round" stroke-linejoin="round"/></g><text x="556.8" y="51.1" text-anchor="start" style="font-size:10.8px;fill:#444;stroke:#444;stroke-width:0.2px;" textLength="47.1" lengthAdjust="spacingAndGlyphs">Fusionner</text><path d="M610.10 45.20L613.60 48.80L617.10 45.20" fill="none" stroke="#666" stroke-width="1" stroke-linecap="round" stroke-linejoin="round"/><rect x="627.3" y="35.6" width="100.8" height="21.6" fill="#fff" stroke="#a9a8a7" stroke-width="1"/><text x="631.1" y="50.9" text-anchor="start" style="font-size:11px;fill:#444;stroke:#444;stroke-width:0.2px;" textLength="37.2" lengthAdjust="spacingAndGlyphs">Général</text><path d="M718.30 45.30L721.80 48.90L725.30 45.30" fill="none" stroke="#505050" stroke-width="1.0" stroke-linecap="round" stroke-linejoin="round"/><text x="746.7" y="51.6" text-anchor="start" style="font-size:15.2px;fill:#4a4a4a;stroke:#4a4a4a;stroke-width:0.2px;" textLength="6.9" lengthAdjust="spacingAndGlyphs">$</text><path d="M762.50 45.10L766.00 48.70L769.50 45.10" fill="none" stroke="#505050" stroke-width="1.0" stroke-linecap="round" stroke-linejoin="round"/><text x="790.2" y="45.5" text-anchor="start" style="font-size:8.8px;fill:#666;stroke:#666;stroke-width:0.2px;" textLength="6.6" lengthAdjust="spacingAndGlyphs">,0</text><text x="785.3" y="53.5" text-anchor="start" style="font-size:8.8px;fill:#666;stroke:#666;stroke-width:0.2px;" textLength="11.5" lengthAdjust="spacingAndGlyphs">,00</text><path d="M783.4 42H790.2M785.6 39.9L783.4 42L785.6 44.1" fill="none" stroke="#3b7dd8" stroke-width="0.95" stroke-linecap="round" stroke-linejoin="round"/><text x="816.7" y="45.5" text-anchor="start" style="font-size:8.8px;fill:#666;stroke:#666;stroke-width:0.2px;" textLength="11.5" lengthAdjust="spacingAndGlyphs">,00</text><text x="821.6" y="53.5" text-anchor="start" style="font-size:8.8px;fill:#666;stroke:#666;stroke-width:0.2px;" textLength="6.6" lengthAdjust="spacingAndGlyphs">,0</text><path d="M814 50.2H820.8M818.6 48.1L820.8 50.2L818.6 52.3" fill="none" stroke="#3b7dd8" stroke-width="0.95" stroke-linecap="round" stroke-linejoin="round"/><rect x="845.6" y="40.5" width="14" height="12.2" rx="1" fill="#fdfdfd"/><rect x="848.8" y="40.5" width="4.5" height="3.9" fill="#ee5f5a"/><rect x="848.8" y="45.5" width="4" height="2.4" fill="#4a8de0"/><rect x="848.8" y="48.8" width="6.2" height="3.9" fill="#ee5f5a"/><rect x="845.6" y="40.5" width="14" height="12.2" rx="1" fill="none" stroke="#6a6a6a" stroke-width="0.95"/><path d="M848.8 40.5V52.7M853.6 40.5V52.7M856.7 40.5V52.7M845.6 44.6H859.6M845.6 48.6H859.6" fill="none" stroke="#6a6a6a" stroke-width="0.75" opacity="0.85"/><path d="M864.60 45.10L868.10 48.70L871.60 45.10" fill="none" stroke="#505050" stroke-width="1.0" stroke-linecap="round" stroke-linejoin="round"/><rect x="884.3" y="40.3" width="14.3" height="12.4" rx="1" fill="#fdfdfd"/><rect x="887.40" y="43.70" width="8.6" height="8.6" fill="#5b9be6"/><rect x="888.60" y="44.90" width="6.2" height="6.2" fill="#86b5ee"/><path d="M887.40 40.3V52.699999999999996M884.3 43.70H898.5999999999999M884.3 48.30H887.40M892.50 40.3V43.70" fill="none" stroke="#8a8a8a" stroke-width="0.7"/><rect x="884.3" y="40.3" width="14.3" height="12.4" rx="1" fill="none" stroke="#6a6a6a" stroke-width="0.95"/><path d="M898.80 44.80L891.70 51.90" stroke="#f3f2f1" stroke-width="4" stroke-linecap="round"/><path d="M898.80 44.80L893.70 50.20" stroke="#6a6a6a" stroke-width="2.4" stroke-linecap="round"/><path d="M898.80 44.80L893.70 50.20" stroke="#f4f4f4" stroke-width="1" stroke-linecap="butt" stroke-dasharray="1 0.8"/><path d="M894.30 49.50C893.70 52.60 890.90 53.90 887.50 53.60C889.50 52.80 890.60 51.50 892.10 48.90Z" fill="#3f82da"/><path d="M903.40 45.10L906.90 48.70L910.40 45.10" fill="none" stroke="#505050" stroke-width="1.0" stroke-linecap="round" stroke-linejoin="round"/><rect x="923.3" y="40.3" width="14.3" height="12.4" rx="1" fill="#fdfdfd"/><rect x="926.90" y="43.90" width="4.6" height="4.4" fill="#6ba4e8"/><rect x="931.90" y="48.50" width="5.2" height="4.2" fill="#3f82da"/><path d="M926.90 40.3V52.699999999999996M931.70 40.3V52.699999999999996M923.3 43.90H937.5999999999999M923.3 48.30H937.5999999999999" fill="none" stroke="#8a8a8a" stroke-width="0.7"/><rect x="923.3" y="40.3" width="14.3" height="12.4" rx="1" fill="none" stroke="#6a6a6a" stroke-width="0.95"/><path d="M937.80 44.80L930.70 51.90" stroke="#f3f2f1" stroke-width="4" stroke-linecap="round"/><path d="M937.80 44.80L932.70 50.20" stroke="#6a6a6a" stroke-width="2.4" stroke-linecap="round"/><path d="M937.80 44.80L932.70 50.20" stroke="#f4f4f4" stroke-width="1" stroke-linecap="butt" stroke-dasharray="1 0.8"/><path d="M933.30 49.50C932.70 52.60 929.90 53.90 926.50 53.60C928.50 52.80 929.60 51.50 931.10 48.90Z" fill="#3f82da"/><path d="M942.30 45.10L945.80 48.70L949.30 45.10" fill="none" stroke="#505050" stroke-width="1.0" stroke-linecap="round" stroke-linejoin="round"/><rect x="962" y="40.3" width="14.3" height="12.4" fill="#fdfdfd"/><rect x="966.77" y="44.43" width="4.77" height="8.27" fill="#5b9be6"/><rect x="962" y="40.3" width="14.3" height="12.4" fill="none" stroke="#666" stroke-width="0.9"/><path d="M966.77 40.3V52.699999999999996M971.53 40.3V52.699999999999996M962 44.43H976.3M962 48.57H976.3" fill="none" stroke="#666" stroke-width="0.77"/><path d="M966.17 40.4V39.2H972.13V40.4" fill="none" stroke="#3b7dd8" stroke-width="0.9"/><path d="M981.00 45.10L984.50 48.70L988.00 45.10" fill="none" stroke="#505050" stroke-width="1.0" stroke-linecap="round" stroke-linejoin="round"/><path d="M1020.2 42.2V40.3H1009.8L1015.4 46.4L1009.8 52.5H1020.2V50.6" fill="none" stroke="#555" stroke-width="1.1" stroke-linejoin="miter"/><rect x="3.6" y="66.6" width="95.6" height="17.6" fill="#fff"/><rect x="102.9" y="66.6" width="69.1" height="17.6" fill="#fff"/><rect x="175.6" y="66.6" width="860" height="17.6" fill="#fff"/><text x="5.9" y="79" text-anchor="start" style="font-size:10.4px;fill:#333;stroke:#333;stroke-width:0.2px;" textLength="17.6" lengthAdjust="spacingAndGlyphs">K16</text><path d="M92.5 73.4L94.6 75.4L96.7 73.4" fill="none" stroke="#444" stroke-width="1.3" stroke-linecap="round" stroke-linejoin="round"/><path d="M110.1 71.1L118.7 79.4M118.7 71.1L110.1 79.4" fill="none" stroke="#bdbcbb" stroke-width="1"/><path d="M131.5 75.7L135.6 79L143.7 71.1" fill="none" stroke="#bdbcbb" stroke-width="1"/><text x="156" y="79" style="font-family:'Liberation Serif',serif;font-style:italic;font-size:13px;fill:#3a3a3a;stroke:#3a3a3a;stroke-width:0.25px">f<tspan style="font-size:9.5px" dy="0.2">x</tspan></text></svg>
<svg width="1024" height="28" viewBox="0 580 1024 28" style="position:absolute;left:0;top:580px;font-family:'Liberation Sans',sans-serif">
<rect x="0" y="580" width="1024" height="28" fill="#f3f2f1"/>
<rect x="0" y="605.3" width="1024" height="0.8" fill="#e6e5e4"/>
<rect x="0" y="606.1" width="1024" height="2" fill="#f8f8f7"/>
<path d="M14.2 588.6L10.8 592.1L14.2 595.6" fill="none" stroke="#c9c8c7" stroke-width="1.1" stroke-linecap="round" stroke-linejoin="round"/>
<path d="M36 588.6L39.4 592.1L36 595.6" fill="none" stroke="#c9c8c7" stroke-width="1.1" stroke-linecap="round" stroke-linejoin="round"/>
<path d="M58.6 589.2H67.6M58.6 592.2H67.6M58.6 595.2H67.6" fill="none" stroke="#555" stroke-width="1.1"/>
<rect x="78.4" y="582" width="52.4" height="19.9" rx="2.2" fill="#e8392b"/>
<text x="104.6" y="596" text-anchor="middle" textLength="43.2" lengthAdjust="spacingAndGlyphs" style="font-size:10.8px;fill:#fff">A propos</text>
<text x="140.6" y="596" textLength="87.8" lengthAdjust="spacingAndGlyphs" style="font-size:10.8px;fill:#3a3a3a">Pointage_Mensuel</text>
<rect x="140.6" y="602.9" width="88" height="2" fill="#2f7d48"/>
<path d="M243.2 592.2H252M247.6 587.8V596.6" fill="none" stroke="#555" stroke-width="1.05"/>
</svg>

</body></html>
